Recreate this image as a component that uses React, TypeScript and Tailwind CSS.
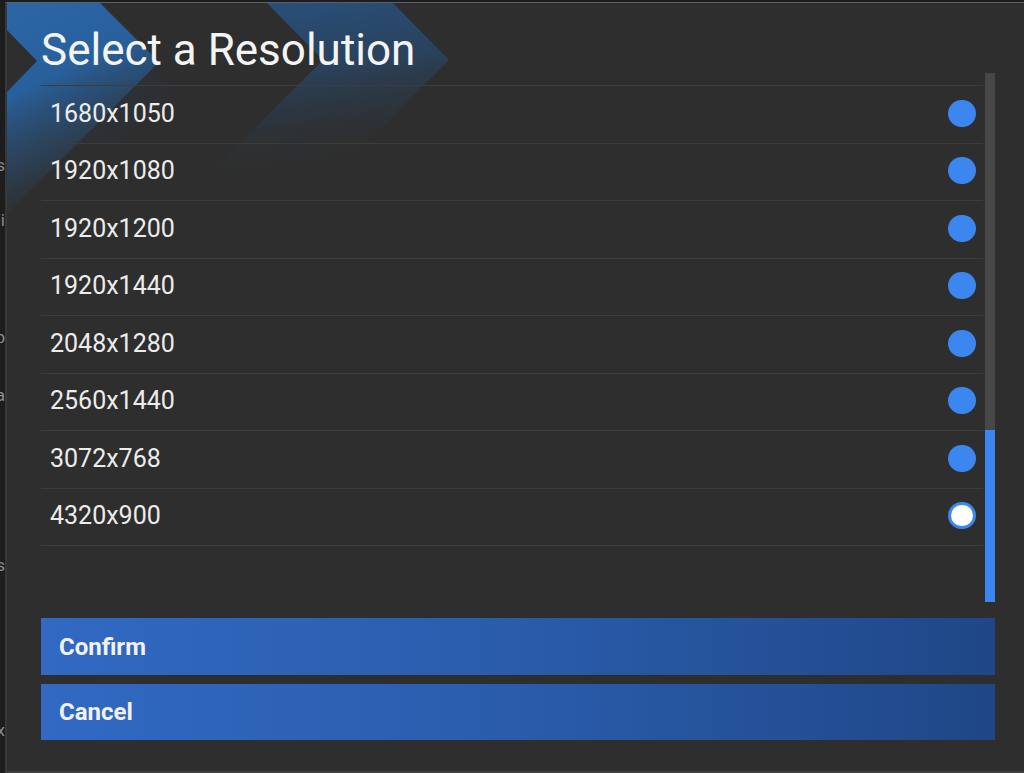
import { useState } from 'react';

const resolutions = [
  '1680x1050',
  '1920x1080',
  '1920x1200',
  '1920x1440',
  '2048x1280',
  '2560x1440',
  '3072x768',
  '4320x900',
];

// bits of the page underneath that peek out on the left edge
const peeks = [
  { word: 'Options', gap: 157 },
  { word: 'Ui', gap: 38 },
  { word: 'Db', gap: 100 },
  { word: 'Da', gap: 41 },
  { word: 'Res', gap: 153 },
  { word: 'Fx', gap: 148 },
];

function Chevrons() {
  return (
    <svg className="pointer-events-none absolute left-0 top-0" width="520" height="240" viewBox="0 0 520 240">
      <defs>
        <linearGradient id="chev1" x1="0" y1="0" x2="0.35" y2="1">
          <stop offset="0" stopColor="#2c66a6" />
          <stop offset="0.4" stopColor="#28609c" />
          <stop offset="0.75" stopColor="#2a4b6e" stopOpacity="0.5" />
          <stop offset="1" stopColor="#2e2e2e" stopOpacity="0" />
        </linearGradient>
        <linearGradient id="chev2" x1="0" y1="0" x2="0.2" y2="1">
          <stop offset="0" stopColor="#29527e" />
          <stop offset="0.45" stopColor="#284a70" stopOpacity="0.7" />
          <stop offset="1" stopColor="#2e2e2e" stopOpacity="0" />
        </linearGradient>
        <linearGradient id="chevShade" x1="0" y1="0" x2="1" y2="1">
          <stop offset="0" stopColor="#24405e" stopOpacity="0.7" />
          <stop offset="1" stopColor="#2e2e2e" stopOpacity="0" />
        </linearGradient>
      </defs>
      <polygon points="120,40 166,86 110,142 70,142 126,86 92,52" fill="url(#chevShade)" />
      <polygon points="0,0 93,0 152,59 0,211 0,89 30,58 0,27" fill="url(#chev1)" />
      <polygon points="260,0 386,0 442,57 320,179 194,179 316,57" fill="url(#chev2)" />
    </svg>
  );
}

export default function App() {
  const [selected, setSelected] = useState('4320x900');

  return (
    <div className="flex h-[773px] w-[1024px] overflow-hidden bg-[#1d1d1d] font-['Roboto','Liberation_Sans',sans-serif]">
      {/* clipped page behind the dialog */}
      <div className="w-[5px] shrink-0 overflow-hidden">
        <div className="ml-[-75px] flex w-[80px] flex-col items-end text-[17px] leading-none text-[#8c8c8c]">
          {peeks.map((p) => (
            <span key={p.word} style={{ marginTop: p.gap }}>
              {p.word}
            </span>
          ))}
        </div>
      </div>

      <div className="flex flex-1 flex-col pt-[2px]">
        <div className="relative flex flex-1 flex-col border-l-2 border-t border-b-2 border-l-[#383838] border-t-[#5a616b] border-b-[#3f3f3f] bg-[#2e2e2e] pl-[34px] pr-[29px]">
          <Chevrons />

          <div className="relative h-[70px] pt-[25px]">
            <h1 className="text-[44px] font-normal leading-none text-[#f4f4f4]">Select a Resolution</h1>
          </div>

          <div className="relative flex h-[529px] gap-[2px]">
            <div className="flex-1 pt-[12px]">
              <ul className="border-b border-[#3d3d3d]">
                {resolutions.map((r) => {
                  const on = r === selected;
                  return (
                    <li
                      key={r}
                      onClick={() => setSelected(r)}
                      className="flex h-[57.5px] cursor-pointer items-center justify-between border-t border-[#3d3d3d] pb-[2px] pl-[9px] pr-[7px]"
                    >
                      <span className="text-[25px] leading-none text-[#ececec]">{r}</span>
                      {on ? (
                        <span className="h-[27px] w-[28px] rounded-full border-[3px] border-[#3b86ef] bg-white" />
                      ) : (
                        <span className="h-[27px] w-[28px] rounded-full bg-[#3b86ef]" />
                      )}
                    </li>
                  );
                })}
              </ul>
            </div>

            <div className="flex w-[10px] flex-col">
              <div className="h-[357px] bg-[#474747]" />
              <div className="flex-1 bg-[#3a86ee]" />
            </div>
          </div>

          <div className="relative mt-[16px] flex flex-col gap-[9px]">
            <button className="flex h-[57px] items-center bg-linear-to-r from-[#3169c3] via-[#2a5cab] to-[#1f4787] pl-[18px] text-left text-[24px] font-bold text-[#f2f2f2]">
              Confirm
            </button>
            <button className="flex h-[56px] items-center bg-linear-to-r from-[#3169c3] via-[#2a5cab] to-[#1f4787] pl-[18px] text-left text-[24px] font-bold text-[#f2f2f2]">
              Cancel
            </button>
          </div>
        </div>
      </div>
    </div>
  );
}
